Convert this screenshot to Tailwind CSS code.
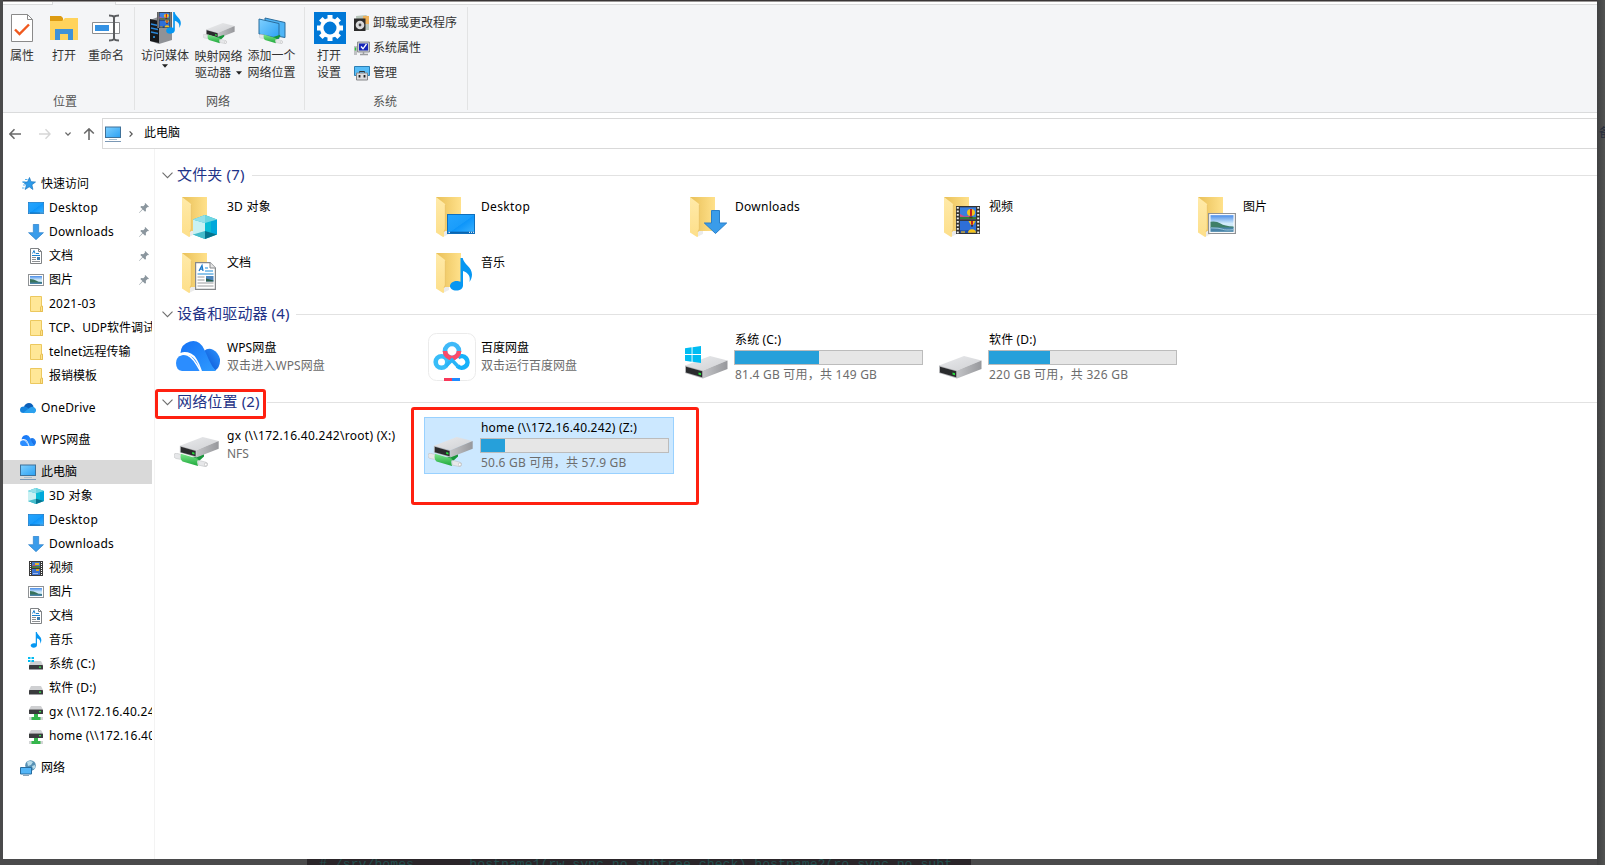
<!DOCTYPE html>
<html lang="zh-CN">
<head>
  <meta charset="utf-8">
  <title>此电脑</title>
  <script src="https://cdn.jsdelivr.net/npm/@tailwindcss/browser@4"></script>
</head>
<body class="relative h-[865px] w-[1605px] overflow-hidden bg-[#4a4a4b] pl-[3px] pr-2 font-['Noto_Sans','Noto_Sans_CJK_SC',sans-serif] text-xs leading-[18px] text-black">

  <!-- icon sprite -->
  <svg class="absolute h-0 w-0">
    <defs>
      <linearGradient id="gBack" x1="0" y1="0" x2="1" y2="0"><stop offset="0" stop-color="#e9c058"/><stop offset="1" stop-color="#ffe18b"/></linearGradient>
      <linearGradient id="gFlap" x1="0" y1="0" x2="0" y2="1"><stop offset="0" stop-color="#ffeaa9"/><stop offset="1" stop-color="#fddf8a"/></linearGradient>
      <linearGradient id="gScreen" x1="0" y1="0" x2="1" y2="1"><stop offset="0" stop-color="#25a5ff"/><stop offset=".5" stop-color="#1a9dfb"/><stop offset=".52" stop-color="#0d95fa"/><stop offset="1" stop-color="#3db3ff"/></linearGradient>
      <linearGradient id="gPc" x1="0" y1="0" x2="1" y2="1"><stop offset="0" stop-color="#7fd0ff"/><stop offset="1" stop-color="#2ba0f2"/></linearGradient>
      <linearGradient id="gTop" x1="0" y1="0" x2="1" y2="1"><stop offset="0" stop-color="#e9eaec"/><stop offset="1" stop-color="#d0d1d4"/></linearGradient>
      <linearGradient id="gSide" x1="0" y1="0" x2="1" y2="0"><stop offset="0" stop-color="#c3c4c7"/><stop offset="1" stop-color="#97989c"/></linearGradient>
      <linearGradient id="gGreen" x1="0" y1="0" x2="0" y2="1"><stop offset="0" stop-color="#7be58b"/><stop offset="1" stop-color="#1ea83a"/></linearGradient>
      <linearGradient id="gSky" x1="0" y1="0" x2="0" y2="1"><stop offset="0" stop-color="#4a8de8"/><stop offset=".5" stop-color="#d3ecfb"/><stop offset="1" stop-color="#bfe0f2"/></linearGradient>
      <linearGradient id="gCloud" x1="0" y1="0" x2="1" y2="1"><stop offset="0" stop-color="#1572f5"/><stop offset="1" stop-color="#2f9bff"/></linearGradient>
      <linearGradient id="gCloudR" x1="0" y1="1" x2="1" y2="0"><stop offset="0" stop-color="#0b4fd0"/><stop offset="1" stop-color="#2c96ff"/></linearGradient>
    </defs>

    <symbol id="folder" viewBox="0 0 48 48">
      <path d="M15 44l6-3v-3h-6z" fill="#000" opacity=".08"/>
      <path d="M8 4h25v34H12z" fill="url(#gBack)"/>
      <path d="M8 4l8.500 6.500q.8.8.8 2V36l-1.300 3V43.500L15 44l-7-4.500z" fill="url(#gFlap)"/>
      <path d="M17.300 12v24l-1.300 3" fill="none" stroke="#e2b95a" stroke-width=".6"/>
    </symbol>

    <symbol id="cube" viewBox="0 0 24 24">
      <path d="M12 0l12 4.500v15L12 24 0 19.500v-15z" fill="#19b7cf"/>
      <path d="M0 4.500L12 8v12L0 19.500z" fill="#c9f1f3"/>
      <path d="M12 8l12-3.500v15L12 16z" fill="#00a8dc"/>
      <path d="M12 8v9l6 2V6.200z" fill="#08bcd6"/>
      <path d="M0 4.500L12 0l12 4.500L12 8z" fill="#6fd6e2"/>
      <path d="M0 4.500L12 0v8z" fill="#93e0e9"/>
      <path d="M0 19.500L12 16v8z" fill="#46bccb"/>
      <path d="M12 16l12 3.500L12 24z" fill="#05738e"/>
    </symbol>

    <symbol id="desk" viewBox="0 0 28 20" preserveAspectRatio="none">
      <rect x=".5" y=".5" width="27" height="19" fill="url(#gScreen)" stroke="#0f6fbd"/>
      <path d="M1 18.300h26" stroke="#0b5ea6" stroke-width="1.200"/>
      <path d="M1.500 18.300h1.500M22 18.300h1M24 18.300h1M26 18.300h1" stroke="#fff" stroke-width="1"/>
    </symbol>

    <symbol id="down" viewBox="0 0 24 24">
      <path d="M8 .5h8v12.500h7.200L12 23.500.8 13H8z" fill="#3a9cea" stroke="#2a7fc9"/>
    </symbol>

    <symbol id="doc" viewBox="0 0 21 28">
      <path d="M.6.6H15L20.400 6v21.400H.6z" fill="#fff" stroke="#85888b" stroke-width="1.200"/>
      <path d="M15 .6V6h5.400" fill="#e6e6e6" stroke="#85888b"/>
      <path d="M4 9l3-5.500L8 9M5 7.200h3" fill="none" stroke="#1979ca" stroke-width="1.300"/>
      <path d="M10 6h3M10 9h8M2.500 12h16" stroke="#1d8bd8" stroke-width="1.100"/>
      <path d="M2.500 15h7M2.500 18h7M2.500 21h16M2.500 24h16" stroke="#9a9c9e"/>
      <rect x="11" y="14" width="7.500" height="5.500" fill="#4d86bd"/><path d="M11 19.500v-3l7.500 2v1z" fill="#2c5d49"/>
    </symbol>

    <symbol id="minidoc" viewBox="0 0 16 16">
      <path d="M2.500.5h8l3 3v12h-11z" fill="#fff" stroke="#7f8285"/>
      <path d="M10.500.5v3h3" fill="none" stroke="#7f8285"/>
      <path d="M4.500 5.500l1.500-3 1 3M8 5.500h3M4 7.500h8" fill="none" stroke="#1d83cf"/>
      <path d="M4 9.500h4M4 11.500h4M4 13.500h8" stroke="#8d9093"/><path d="M9 9h3v3H9z" fill="#3f7fb0"/>
    </symbol>

    <symbol id="photo" viewBox="0 0 28 24" preserveAspectRatio="none">
      <rect x=".6" y=".6" width="26.800" height="22.800" fill="#fff" stroke="#8f9295" stroke-width="1.200"/>
      <rect x="2.500" y="2.500" width="23" height="19" fill="url(#gSky)"/>
      <path d="M2.500 10q6-1 10 2t13 3.500v1.500h-23z" fill="#3f7f67"/>
      <path d="M2.500 16.500h23v5h-23z" fill="#4a84a8"/>
      <path d="M2.500 17q9 0 12 1.500t11 .5" stroke="#9fc9dc" fill="none"/>
    </symbol>

    <symbol id="miniphoto" viewBox="0 0 16 12">
      <rect x=".5" y=".5" width="15" height="11" fill="#fff" stroke="#8f9295"/>
      <rect x="2" y="2" width="12" height="8" fill="url(#gSky)"/>
      <path d="M2 5q4 0 6 1.500t6 1.500v1H2z" fill="#37735c"/><path d="M2 8.500h12V10H2z" fill="#4a84a8"/>
    </symbol>

    <symbol id="film" viewBox="0 0 24 32" preserveAspectRatio="none">
      <rect width="24" height="32" fill="#333"/>
      <path d="M1.800 1v30M22.200 1v30" stroke="#eee" stroke-width="2" stroke-dasharray="2.200 1.800"/>
      <rect x="4" y="1.500" width="16" height="13.500" fill="#3a7fe0"/>
      <rect x="4" y="17" width="16" height="13.500" fill="#2e6fd8"/>
      <path d="M4 9l5 3 3-1 8 3v1H4z" fill="#cf4c8a"/><path d="M4 12.500h16V15H4z" fill="#2f7d3c"/>
      <circle cx="15" cy="7.500" r="4" fill="#f5c21b"/><path d="M14 3.500h2v8h-2z" fill="#c32020"/><path d="M13.500 12h3v2h-3z" fill="#5a3212"/>
      <path d="M12.500 17h7l-2 4.500h-3z" fill="#f5c21b"/><path d="M15 17h2v4.500h-2z" fill="#c32020"/><path d="M15 22h2v1.500h-2z" fill="#3a1d08"/>
      <path d="M4 27.500q4 1 8 0l8 1.500v1.500H4z" fill="#1f4fa8"/><path d="M12 30.500a4 4 0 018 0z" fill="#f5c21b"/><path d="M5 29h4v1.500H5z" fill="#e6b52b"/>
    </symbol>

    <symbol id="minifilm" viewBox="0 0 14 15">
      <path d="M0 0h14v15H0z" fill="#3a3a3a"/>
      <path d="M1.500 1v14M12.500 1v14" stroke="#fff" stroke-dasharray="1 1"/>
      <path d="M3 1h8v6H3z" fill="#4a78c4"/><path d="M3 8h8v6H3z" fill="#3a72d0"/>
      <path d="M3 5h8v2H3z" fill="#4c7a45"/><path d="M6 2h4v2H6z" fill="#eab92a"/><path d="M4 4h3v1H4z" fill="#c9437a"/><path d="M7 8h3v2H7z" fill="#e0a52a"/><path d="M4 12h5v1H4z" fill="#9cb6e8"/>
    </symbol>

    <symbol id="note" viewBox="0 0 22 33">
      <path d="M10.500 0h2.200c.8 6 9.300 9 9.300 16.500 0 3-1 5-2.500 7.500 1.200-5.500-.8-9-6.500-11v14.500c0 3-3 5-6.700 5S0 30.500 0 28s3-5 6.500-5c1.500 0 3 .3 4 .8z" fill="#0697f2"/>
    </symbol>

    <symbol id="drive" viewBox="0 0 43 23">
      <path d="M0 9.500L25 0l17.500 4.500L18 14.500z" fill="url(#gTop)"/>
      <path d="M18 14.500L42.500 4.500V13L18 22.500z" fill="url(#gSide)"/>
      <path d="M0 9.500l18 5v8L0 17z" fill="#b4b5b8"/>
      <path d="M1 10.700l16.200 4.600v5.900L1 16.600z" fill="#2a2b2d"/>
      <path d="M13.500 16.500l2.500.7v2l-2.500-.7z" fill="#27e43c"/>
    </symbol>

    <symbol id="pipe" viewBox="0 0 34 14">
      <path d="M18 5l12-4v2.500L25 8z" fill="#17963a"/>
      <path d="M0 2.500Q0 0 2.500.3l5 1.200v5L2 5.500Q0 5 0 2.500z" fill="#e6e7e9" stroke="#b9bbbd" stroke-width=".5"/>
      <path d="M7 .8l17 5q-1.500 3 0 7.200L8.500 8.500Q5.500 6 7 .8z" fill="url(#gGreen)"/>
      <path d="M24 7.200l8 2q2 .6 1.700 2.400t-2.200 2.100L24 12z" fill="#e6e7e9" stroke="#b9bbbd" stroke-width=".5"/>
      <ellipse cx="31.800" cy="11.500" rx="1.300" ry="1.600" fill="#fff" stroke="#aaa" stroke-width=".5"/>
    </symbol>

    <symbol id="winlogo" viewBox="0 0 16 17">
      <path d="M0 2.300L6.600 1.300V8H0zM7.500 1.200L16 0v8H7.500zM0 9h6.600v6.700L0 14.700zM7.500 9H16v8l-8.500-1.200z" fill="#00bcf2"/>
    </symbol>

    <symbol id="wps" viewBox="0 0 44 30">
      <path d="M28 10q4-3.500 9-1.300T44 18q.3 9-5 11.500L28 18z" fill="url(#gCloudR)"/>
      <path d="M4.500 12Q5 3 14 .5t14 7.500q2 4 5 11t7 11H26Q21 15 15 12.500T4.500 12z" fill="url(#gCloud)"/>
      <path d="M0 22q0-6 6-8t11 2.500T24 30H6q-6-1-6-8z" fill="#2b8dff"/>
      <path d="M0 15.500q6-3.500 11.500-1.500T24.500 30" fill="none" stroke="#fff" stroke-width="1.500"/>
    </symbol>

    <symbol id="pc" viewBox="0 0 16 16">
      <rect x=".5" y="1" width="15" height="10.500" fill="url(#gPc)" stroke="#3f7199"/>
      <path d="M4 13.500h8" stroke="#a9bfce"/><path d="M0 15.500h16" stroke="#7b98b5"/>
    </symbol>

    <symbol id="minidrive" viewBox="0 0 16 16">
      <path d="M3 4h10l2 4H1z" fill="#cfd0d2"/>
      <rect x="1" y="8" width="14" height="4.500" rx=".6" fill="#3a3b3d"/>
      <path d="M1 12.500h14" stroke="#9d9ea1"/>
      <rect x="11" y="9.500" width="2" height="1.300" fill="#35e44a"/>
    </symbol>

    <symbol id="mininet" viewBox="0 0 16 16">
      <path d="M3 1h10l2 3.500H1z" fill="#cfd0d2"/>
      <rect x="1" y="4.500" width="14" height="4.500" rx=".6" fill="#3a3b3d"/>
      <rect x="11" y="6" width="2" height="1.300" fill="#35e44a"/>
      <path d="M6 9h4v3h3v3H3v-3h3z" fill="#35b64c"/>
      <path d="M1 12h2.500v3H1zM12.500 12H15v3h-2.500z" fill="#d3d5d6"/>
    </symbol>

    <symbol id="minifolder" viewBox="0 0 16 16">
      <path d="M2.500.5h11v10l1 .5v4.500h-12z" fill="#ffe797" stroke="#ecc85e"/>
      <path d="M12.500 15.500V11l1-1h1v5.500z" fill="#ffe38a" stroke="#e2b94a" stroke-width=".8"/>
    </symbol>

    <symbol id="pin" viewBox="0 0 10 10">
      <path d="M6.200 0L10 3.700l-1 .5-.5-.2-1.700 1.800.2 2-.9.9-2.300-2.300L.300 10 0 9.700l3.400-3.600L1.300 4l1-.9 2 .2L6 1.600 5.700.8z" fill="#8b969e"/>
    </symbol>

    <symbol id="caret" viewBox="0 0 6 4">
      <path d="M0 .3h6L3 3.800z" fill="#222"/>
    </symbol>

    <symbol id="chev" viewBox="0 0 11 7">
      <path d="M.5.700L5.500 5.700 10.500.700" fill="none" stroke="#6d6d6d" stroke-width="1.100"/>
    </symbol>
  </svg>

  <!-- strip of the page above the window -->
  <div class="h-px bg-[#393536]"></div>

  <div class="flex h-[858px] flex-col bg-white">
    <!-- tab strip edge -->
    <div class="flex h-1 border-t border-[#989595]">
      <div class="w-[49px] border-b border-[#dadbdc]"></div>
      <div class="w-16 border-x border-[#dadbdc] bg-[#f4f5f7]"></div>
      <div class="flex-1 border-b border-[#dadbdc]"></div>
    </div>

    <!-- ribbon -->
    <div class="flex h-[108px] border-b border-[#dadbdc] bg-[#f4f5f7] leading-[17px] text-[#333]">
      <div class="my-0.5 flex w-[132px] flex-col border-r border-[#e2e3e4]">
        <div class="flex h-[83px] text-center">
          <div class="flex w-[38px] flex-col items-center">
            <svg class="mt-[7px] mb-[5px] h-7 w-[22px] shrink-0" viewBox="0 0 22 28"><path d="M.5.500h16l5 5v22H.5z" fill="#fff" stroke="#8a8a8a"/><path d="M16.500.500v5h5" fill="none" stroke="#8a8a8a"/><path d="M4 15.500l4.500 4.500L18 10.500" fill="none" stroke="#f0591e" stroke-width="2.400"/></svg>
            <span>属性</span>
          </div>
          <div class="flex w-[46px] flex-col items-center">
            <svg class="mt-[7px] mb-[5px] h-7 w-7 shrink-0" viewBox="0 0 28 28"><path d="M0 2h11l2 2v4H0z" fill="#dd9b12"/><path d="M0 7h12l3-3h13v22H0z" fill="#ffd35c"/><path d="M5 26V15h18v11h-5v-6h-8v6z" fill="#3f92d8"/></svg>
            <span>打开</span>
          </div>
          <div class="flex w-[38px] flex-col items-center whitespace-nowrap">
            <svg class="mt-[7px] mb-[5px] h-7 w-7 shrink-0" viewBox="0 0 28 28"><path d="M.5 8.500h27v11H.5z" fill="#fff" stroke="#8b8d90"/><path d="M3 11h14v6H3z" fill="#3391e3"/><path d="M22 2v24M17 1.500q4 0 5 1.500 1-1.500 5-1.500M17 26.500q4 0 5-1.500 1 1.500 5 1.500" fill="none" stroke="#5b5d60" stroke-width="2"/></svg>
            <span>重命名</span>
          </div>
        </div>
        <div class="w-[124px] pt-[3px] text-center text-[#555]">位置</div>
      </div>

      <div class="my-0.5 flex w-[170px] flex-col border-r border-[#e2e3e4]">
        <div class="flex h-[83px] pl-[3px] text-center">
          <div class="flex w-[54px] flex-col items-center whitespace-nowrap">
            <svg class="mt-[5px] mb-[3px] h-8 w-8 shrink-0" viewBox="0 0 32 32">
              <path d="M1 8l8-3 14 3v20l-13 4-9-3z" fill="#8f9297"/><path d="M1 7l9 2v22l-9-2z" fill="#17191c"/><path d="M2 12l7 1.500M2 16l7 1.500M2 20l7 1.500" stroke="#2a87d8" stroke-width="1.300"/><circle cx="5" cy="25" r="1" fill="#39a2f0"/>
              <use href="#film" x="8" y="0" width="15" height="16"/>
              <use href="#note" x="17" y="0" width="15" height="22"/>
            </svg>
            <span>访问媒体</span>
            <svg class="h-1 w-1.5"><use href="#caret"/></svg>
          </div>
          <div class="flex w-[53px] flex-col items-center whitespace-nowrap">
            <svg class="mt-[5px] mb-[3px] h-[33px] w-8 shrink-0" viewBox="0 0 32 33"><use href="#drive" x="3" y="11" width="29" height="15.500"/><use href="#pipe" x="0" y="22" width="24" height="10"/></svg>
            <span>映射网络</span>
            <span class="flex items-center gap-[5px] leading-4">驱动器<svg class="h-1 w-1.5"><use href="#caret"/></svg></span>
          </div>
          <div class="flex w-[53px] flex-col items-center whitespace-nowrap">
            <svg class="mt-[7px] mb-[3px] h-[30px] w-7 shrink-0" viewBox="0 0 28 30"><path d="M7 4l20 4.500v15L7 20z" fill="#4fb5f7" stroke="#2b6d9c"/><path d="M1 5l20 4.500v15L1 20z" fill="url(#gPc)" stroke="#2b6d9c"/><use href="#pipe" x="1" y="20" width="24" height="10"/></svg>
            <span>添加一个</span>
            <span>网络位置</span>
          </div>
        </div>
        <div class="w-[166px] pt-[3px] text-center text-[#555]">网络</div>
      </div>

      <div class="my-0.5 flex w-[163px] flex-col border-r border-[#e2e3e4]">
        <div class="flex h-[83px]">
          <div class="ml-1 flex w-[42px] flex-col items-center">
            <svg class="mt-[5px] mb-[3px] h-8 w-8 shrink-0" viewBox="0 0 32 32">
              <rect width="32" height="32" fill="#0078d7"/>
              <circle cx="16" cy="16" r="8.300" fill="none" stroke="#fff" stroke-width="3.600"/>
              <g stroke="#fff" stroke-width="5"><path d="M16 3v4M16 25v4M3 16h4M25 16h4"/><path d="M6.800 6.800l2.800 2.800M22.400 22.400l2.800 2.800M6.800 25.200l2.800-2.800M22.400 9.600l2.800-2.800"/></g>
            </svg>
            <span class="pr-[2px]">打开</span>
            <span class="pr-[2px]">设置</span>
          </div>
          <div class="ml-[3px] flex flex-col gap-2 pt-[7px] whitespace-nowrap">
            <div class="flex items-center gap-[3px]">
              <svg class="h-4 w-4" viewBox="0 0 16 16"><path d="M2 1l10-1 3 2v13H3z" fill="#b9c6bb"/><path d="M9 1h6v8H9z" fill="#efb25a"/><path d="M0 3.500h11.500V16H0z" fill="#2b2b2b"/><circle cx="6" cy="10" r="4.300" fill="#d8d9da"/><circle cx="6" cy="10" r="1.400" fill="#444"/></svg>
              卸载或更改程序
            </div>
            <div class="flex items-center gap-[3px]">
              <svg class="h-4 w-4" viewBox="0 0 16 16"><path d="M0 6h3v9H0z" fill="#bfc1c3"/><path d="M.8 7.500h1.400v3H.8z" fill="#2fc33c"/><path d="M3.500 2h12v10h-12z" fill="#c9cbce" stroke="#8c8f92"/><path d="M5 3.500h9v7H5z" fill="#1524b8"/><path d="M7 6.500l2 2.300L12.500 4" fill="none" stroke="#fff" stroke-width="1.300"/><path d="M6 14.500h8M9.500 12v2" stroke="#9b9da0" stroke-width="1.500"/></svg>
              系统属性
            </div>
            <div class="flex items-center gap-[3px]">
              <svg class="h-4 w-4" viewBox="0 0 16 16"><path d="M.5 1.500h15v9H.5z" fill="#56bdf8" stroke="#2b7fb5"/><path d="M5.500 8V6.500h5V8" fill="none" stroke="#333"/><path d="M2.500 8h11v7h-11z" fill="#dcdddf" stroke="#85878a"/><path d="M5.500 10v2.500M10.500 10v2.500" stroke="#222" stroke-width="1.800"/></svg>
              管理
            </div>
          </div>
        </div>
        <div class="w-40 pt-[3px] text-center text-[#555]">系统</div>
      </div>
    </div>

    <!-- address bar -->
    <div class="flex h-9 pt-[5px]">
      <div class="flex w-[99px] items-center pl-1.5 text-[#666]">
        <svg class="h-3 w-3" viewBox="0 0 12 12"><path d="M12 6H1M5.500 1.200L.9 6l4.600 4.800" fill="none" stroke="#6a6a6a" stroke-width="1.600"/></svg>
        <svg class="ml-[18px] h-3 w-3" viewBox="0 0 12 12"><path d="M0 6h11M6.500 1.200L11.100 6l-4.600 4.800" fill="none" stroke="#d6d6d6" stroke-width="1.400"/></svg>
        <svg class="ml-[14px] h-1 w-1.5" viewBox="0 0 6 4"><path d="M.4.500L3 3.100 5.600.500" fill="none" stroke="#6a6a6a" stroke-width="1.300"/></svg>
        <svg class="ml-3 h-3 w-3" viewBox="0 0 12 12"><path d="M6 12V1M1.200 5.500L6 .9l4.800 4.600" fill="none" stroke="#6a6a6a" stroke-width="1.600"/></svg>
      </div>
      <div class="flex flex-1 items-center border-y border-l border-[#d9d9d9] pl-0.5">
        <svg class="h-4 w-4"><use href="#pc"/></svg>
        <svg class="ml-2 h-1.5 w-1" viewBox="0 0 4 6"><path d="M.6.400L3.200 3 .6 5.600" fill="none" stroke="#555" stroke-width="1.200"/></svg>
        <span class="ml-[11px] pb-0.5">此电脑</span>
      </div>
    </div>

    <div class="flex min-h-0 flex-1">
      <!-- navigation pane -->
      <nav class="w-[149px] shrink-0 overflow-hidden pt-[23px] whitespace-nowrap">
        <div class="flex h-6 items-center gap-[5px] pl-[17px]">
          <svg class="h-4 w-4" viewBox="0 0 16 16"><path d="M9.500 1.500l1.500 4.200 4.500.3-3.600 2.800 1 4.700-3.700-2.700-4 2.700L6.500 9 3 6h4.500z" fill="#2d9bea" stroke="#1b76bd" stroke-width=".7"/><path d="M2 6h3M3 9h2.500M2 12h2.500M5 3.500h2.500" stroke="#5ab4ee"/></svg>
          快速访问
        </div>
        <div class="flex h-6 items-center gap-[5px] pl-[25px]"><svg class="h-3 w-4"><use href="#desk"/></svg><span class="tracking-[0.35px]">Desktop</span><svg class="mr-[3px] ml-auto h-2.5 w-2.5"><use href="#pin"/></svg></div>
        <div class="flex h-6 items-center gap-[5px] pl-[25px]"><svg class="h-4 w-4"><use href="#down"/></svg><span class="tracking-[0.25px]">Downloads</span><svg class="mr-[3px] ml-auto h-2.5 w-2.5"><use href="#pin"/></svg></div>
        <div class="flex h-6 items-center gap-[5px] pl-[25px]"><svg class="h-4 w-4"><use href="#minidoc"/></svg>文档<svg class="mr-[3px] ml-auto h-2.5 w-2.5"><use href="#pin"/></svg></div>
        <div class="flex h-6 items-center gap-[5px] pl-[25px]"><svg class="h-3 w-4"><use href="#miniphoto"/></svg>图片<svg class="mr-[3px] ml-auto h-2.5 w-2.5"><use href="#pin"/></svg></div>
        <div class="flex h-6 items-center gap-[5px] pl-[25px]"><svg class="h-4 w-4 shrink-0"><use href="#minifolder"/></svg><span class="tracking-[0.25px]">2021-03</span></div>
        <div class="flex h-6 items-center gap-[5px] pl-[25px]"><svg class="h-4 w-4 shrink-0"><use href="#minifolder"/></svg>TCP、UDP软件调试</div>
        <div class="flex h-6 items-center gap-[5px] pl-[25px]"><svg class="h-4 w-4 shrink-0"><use href="#minifolder"/></svg><span class="tracking-[0.1px]">telnet远程传输</span></div>
        <div class="flex h-6 items-center gap-[5px] pl-[25px]"><svg class="h-4 w-4 shrink-0"><use href="#minifolder"/></svg>报销模板</div>

        <div class="mt-2 flex h-6 items-center gap-[5px] pl-[17px]">
          <svg class="h-4 w-4" viewBox="0 0 16 16"><path d="M4 6.500Q5.500 3 9 3t4.500 4L9 11z" fill="#0b5fb8"/><path d="M3.500 13Q0 13 0 9.800T4 6.500q2-.5 4 1.500l5 5z" fill="#1583dd"/><path d="M3 13l7-5.500q3-1.500 5 .5t.500 4-2.500 1z" fill="#2ba1ee"/></svg>
          <span class="tracking-[0.2px]">OneDrive</span>
        </div>
        <div class="mt-2 flex h-6 items-center gap-[5px] pl-[17px]"><svg class="h-[11px] w-4"><use href="#wps"/></svg><span class="tracking-[0.1px]">WPS网盘</span></div>
        <div class="mt-2 flex h-6 items-center gap-[5px] bg-[#d9d9d9] pl-[17px]"><svg class="h-4 w-4"><use href="#pc"/></svg>此电脑</div>
        <div class="flex h-6 items-center gap-[5px] pl-[25px]"><svg class="h-4 w-4"><use href="#cube"/></svg><span class="tracking-[0.25px]">3D 对象</span></div>
        <div class="flex h-6 items-center gap-[5px] pl-[25px]"><svg class="h-3 w-4"><use href="#desk"/></svg><span class="tracking-[0.35px]">Desktop</span></div>
        <div class="flex h-6 items-center gap-[5px] pl-[25px]"><svg class="h-4 w-4"><use href="#down"/></svg><span class="tracking-[0.25px]">Downloads</span></div>
        <div class="flex h-6 items-center gap-[6px] pl-[26px]"><svg class="h-[15px] w-3.5"><use href="#minifilm"/></svg>视频</div>
        <div class="flex h-6 items-center gap-[5px] pl-[25px]"><svg class="h-3 w-4"><use href="#miniphoto"/></svg>图片</div>
        <div class="flex h-6 items-center gap-[5px] pl-[25px]"><svg class="h-4 w-4"><use href="#minidoc"/></svg>文档</div>
        <div class="flex h-6 items-center gap-[5px] pl-[25px]"><svg class="h-4 w-4"><use href="#note"/></svg>音乐</div>
        <div class="flex h-6 items-center gap-[5px] pl-[25px]"><svg class="h-4 w-4" viewBox="0 0 16 16"><use href="#minidrive" x="0" y="1" width="16" height="16"/><path d="M0 1h2.500v2H0zM3.500 1H6v2H3.500zM0 4h2.500v2H0zM3.500 4H6v2H3.500z" fill="#00bcf2"/></svg><span class="tracking-[0.15px]">系统 (C:)</span></div>
        <div class="flex h-6 items-center gap-[5px] pl-[25px]"><svg class="mt-1 h-4 w-4"><use href="#minidrive"/></svg><span class="tracking-[0.15px]">软件 (D:)</span></div>
        <div class="flex h-6 items-center gap-[5px] pl-[25px]"><svg class="mt-0.5 h-4 w-4 shrink-0"><use href="#mininet"/></svg><span class="tracking-[0.28px]">gx (\\172.16.40.242\root) (X:)</span></div>
        <div class="flex h-6 items-center gap-[5px] pl-[25px]"><svg class="mt-0.5 h-4 w-4 shrink-0"><use href="#mininet"/></svg><span class="tracking-[0.2px]">home (\\172.16.40.242) (Z:)</span></div>
        <div class="mt-2 flex h-6 items-center gap-[5px] pl-[17px]">
          <svg class="h-4 w-4" viewBox="0 0 16 16"><circle cx="10.500" cy="5.500" r="5.300" fill="#5791b5"/><path d="M7 2q3-2 6 0l-2 3-3 1zM12 6l3-1v3l-2 1z" fill="#b9dcea"/><path d="M.5 7.500h11v6.500H.5z" fill="#53b5f7" stroke="#286d9f"/><path d="M3 15.500h6" stroke="#8aa5ba"/></svg>
          网络
        </div>
      </nav>

      <!-- file list -->
      <main class="ml-0.5 flex-1 border-l border-[#f3f3f3] pt-3">
        <div class="flex h-7 items-center pl-[7px] text-[15px] text-[#1e3287]">
          <svg class="mr-1 h-[7px] w-[11px]"><use href="#chev"/></svg><span class="pb-[2px] tracking-[0.15px]">文件夹 (7)</span><div class="ml-[7px] h-px flex-1 bg-[#e2e2e2]"></div>
        </div>
        <div class="grid grid-cols-[repeat(5,250px)] auto-rows-[56px] gap-x-1 pl-[15px]">
          <div class="flex gap-[5px] pl-1">
            <svg class="mt-1 h-12 w-12" viewBox="0 0 48 48"><use href="#folder"/><use href="#cube" x="19" y="22" width="24" height="24"/></svg>
            <span class="pt-[9px] tracking-[0.25px]">3D 对象</span>
          </div>
          <div class="flex gap-[5px] pl-1">
            <svg class="mt-1 h-12 w-12" viewBox="0 0 48 48"><use href="#folder"/><use href="#desk" x="19" y="21" width="28" height="20"/></svg>
            <span class="pt-[9px] tracking-[0.35px]">Desktop</span>
          </div>
          <div class="flex gap-[5px] pl-1">
            <svg class="mt-1 h-12 w-12" viewBox="0 0 48 48"><use href="#folder"/><use href="#down" x="21.500" y="17" width="24" height="24"/></svg>
            <span class="pt-[9px] tracking-[0.25px]">Downloads</span>
          </div>
          <div class="flex gap-[5px] pl-1">
            <svg class="mt-1 h-12 w-12" viewBox="0 0 48 48"><use href="#folder"/><use href="#film" x="20" y="13" width="24" height="28"/></svg>
            <span class="pt-[9px]">视频</span>
          </div>
          <div class="flex gap-[5px] pl-1">
            <svg class="mt-1 h-12 w-12" viewBox="0 0 48 48"><use href="#folder"/><use href="#photo" x="18" y="20" width="28" height="21"/></svg>
            <span class="pt-[9px]">图片</span>
          </div>
          <div class="flex gap-[5px] pl-1">
            <svg class="mt-1 h-12 w-12" viewBox="0 0 48 48"><use href="#folder"/><use href="#doc" x="21" y="13" width="21" height="28"/></svg>
            <span class="pt-[9px]">文档</span>
          </div>
          <div class="flex gap-[5px] pl-1">
            <svg class="mt-1 h-12 w-12" viewBox="0 0 48 48"><use href="#folder"/><use href="#note" x="22" y="9" width="22" height="33"/></svg>
            <span class="pt-[9px]">音乐</span>
          </div>
        </div>

        <div class="-mt-px flex h-[29px] items-center pl-[7px] text-[15px] text-[#1e3287]">
          <svg class="mr-1 h-[7px] w-[11px]"><use href="#chev"/></svg><span class="pb-[3px] tracking-[0.1px]">设备和驱动器 (4)</span><div class="ml-[7px] h-px flex-1 bg-[#e2e2e2]"></div>
        </div>
        <div class="grid grid-cols-[repeat(5,250px)] auto-rows-[57px] gap-x-1 pl-[15px]">
          <div class="flex gap-[5px] pl-1">
            <svg class="mt-1 h-12 w-12" viewBox="0 0 48 48"><use href="#wps" x="2" y="8" width="44" height="30"/></svg>
            <div class="pt-[10px] tracking-[0.1px]"><div>WPS网盘</div><div class="text-[#6d6d6d]">双击进入WPS网盘</div></div>
          </div>
          <div class="flex gap-[5px] pl-1">
            <svg class="mt-1 h-12 w-12" viewBox="0 0 48 48">
              <rect x=".5" y=".5" width="47" height="47" rx="8" fill="#fff" stroke="#ebebeb"/>
              <g fill="none" stroke-width="4.600"><circle cx="13.500" cy="29" r="5.800" stroke="#38bdf8"/><path d="M30 24.500a5.800 5.800 0 11-.5 8.500" stroke="#16b1fa"/><circle cx="24" cy="18" r="7" stroke="#3fb9f8"/><path d="M17 18a7 7 0 0014 0" stroke="#fb4b69"/><path d="M18 33l6-6 6 6.500" stroke="#28b4f8" stroke-width="3.500"/></g>
              <path d="M16 45h8v3h-8z" fill="#f8385a"/><path d="M24 45h8v3h-8z" fill="#1f8bff"/>
            </svg>
            <div class="pt-[10px]"><div>百度网盘</div><div class="text-[#6d6d6d]">双击运行百度网盘</div></div>
          </div>
          <div class="flex gap-1 pl-1">
            <svg class="mt-1 h-12 w-12" viewBox="0 0 48 48"><use href="#drive" x="3" y="23" width="43" height="23"/><use href="#winlogo" x="3" y="13" width="16" height="17"/></svg>
            <div class="w-[189px] pt-0.5"><div class="pl-px tracking-[0.15px]">系统 (C:)</div><div class="mt-px mb-px h-[15px] border border-[#bcbcbc] bg-[#e6e6e6]"><div class="h-full bg-[#26a0da]" style="width:44.900%"></div></div><div class="pl-px tracking-[0.22px] text-[#6d6d6d]">81.4 GB 可用，共 149 GB</div></div>
          </div>
          <div class="flex gap-1 pl-1">
            <svg class="mt-1 h-12 w-12" viewBox="0 0 48 48"><use href="#drive" x="3" y="23" width="43" height="23"/></svg>
            <div class="w-[189px] pt-0.5"><div class="pl-px tracking-[0.15px]">软件 (D:)</div><div class="mt-px mb-px h-[15px] border border-[#bcbcbc] bg-[#e6e6e6]"><div class="h-full bg-[#26a0da]" style="width:32.600%"></div></div><div class="pl-px tracking-[0.25px] text-[#6d6d6d]">220 GB 可用，共 326 GB</div></div>
          </div>
        </div>

        <div class="mt-0.5 flex h-[29px] items-center pl-[7px] text-[15px] text-[#1e3287]">
          <svg class="mr-1 h-[7px] w-[11px]"><use href="#chev"/></svg><span class="pb-[3px] tracking-[0.15px]">网络位置 (2)</span><div class="ml-[7px] h-px flex-1 bg-[#e2e2e2]"></div>
        </div>
        <div class="grid grid-cols-[repeat(5,250px)] auto-rows-[57px] gap-x-1 pl-[15px]">
          <div class="flex gap-[5px] pl-1">
            <svg class="mt-1 h-12 w-12" viewBox="0 0 48 48"><use href="#pipe" x="0" y="32" width="34" height="14"/><use href="#drive" x="4" y="16" width="43" height="21"/></svg>
            <div class="pt-[10px] whitespace-nowrap"><div class="tracking-[0.28px]">gx (\\172.16.40.242\root) (X:)</div><div class="text-[#6d6d6d]">NFS</div></div>
          </div>
          <div class="flex gap-1 bg-[#cce8ff] pl-1 ring-1 ring-[#99d1ff] ring-inset">
            <svg class="mt-1 h-12 w-12" viewBox="0 0 48 48"><use href="#pipe" x="0" y="32" width="34" height="14"/><use href="#drive" x="4" y="16" width="43" height="21"/></svg>
            <div class="w-[189px] pt-0.5 whitespace-nowrap"><div class="pl-px tracking-[0.2px]">home (\\172.16.40.242) (Z:)</div><div class="mt-px mb-px h-[15px] border border-[#bcbcbc] bg-[#e6e6e6]"><div class="h-full bg-[#26a0da]" style="width:12.900%"></div></div><div class="pl-px tracking-[0.22px] text-[#6d6d6d]">50.6 GB 可用，共 57.9 GB</div></div>
          </div>
        </div>
      </main>
    </div>
  </div>

  <!-- terminal behind the window -->
  <div class="ml-[304px] h-1.5 w-[664px] overflow-hidden bg-[#2a2529] pl-3 font-['Liberation_Mono',monospace] text-[13.2px] leading-[12px] whitespace-pre text-[#24504f]"># /srv/homes       hostname1(rw,sync,no_subtree_check) hostname2(ro,sync,no_subt</div>

  <!-- page behind the window, right edge -->
  <div class="absolute top-0 right-0 h-full w-2 overflow-hidden bg-linear-to-r from-[#404142] to-[#525352]">
    <div class="mt-[125px] ml-0.5 w-4 text-xs text-[#262c3c]">备</div>
  </div>

  <!-- highlight marks -->
  <div class="absolute top-[389px] left-[155px] h-[30px] w-[111px] rounded-[3px] border-3 border-[#ff2010]"></div>
  <div class="absolute top-[407px] left-[411px] h-[98px] w-[288px] rounded-[3px] border-3 border-[#ff2010]"></div>
</body>
</html>
